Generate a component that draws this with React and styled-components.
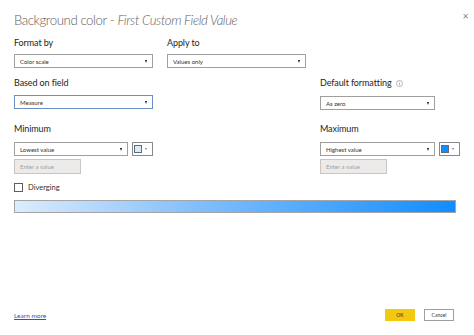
import { styled, createGlobalStyle } from "styled-components";

const GlobalStyle = createGlobalStyle`
  html, body {
    margin: 0;
    padding: 0;
    background: #ffffff;
  }
  body {
    font-family: Lato, "Open Sans", sans-serif;
    color: #252423;
  }
`;

const Dialog = styled.div`
  width: 474px;
  height: 335px;
  box-sizing: border-box;
  display: flex;
  flex-direction: column;
  padding: 0 14px 14px 14px;
  background: #ffffff;
`;

const Header = styled.div`
  display: flex;
  justify-content: space-between;
  align-items: flex-start;
  padding-top: 10px;
  margin-right: -9px;
`;

const Title = styled.h1`
  margin: 0;
  font-size: 13.2px;
  line-height: 20px;
  font-weight: 300;
  letter-spacing: -0.4px;
  color: #605e5c;
  white-space: nowrap;
  em {
    font-style: italic;
  }
`;

const Close = styled.span`
  font-family: "DejaVu Sans", sans-serif;
  font-size: 8px;
  line-height: 9px;
  color: #8a8886;
  margin-top: 2px;
`;

const Form = styled.div`
  display: grid;
  grid-template-columns: 139px 139px 140px;
  column-gap: 14px;
  margin-top: 7px;
`;

const Field = styled.div`
  display: flex;
  flex-direction: column;
  margin-top: ${(p) => p.$top || 0}px;
`;

const Label = styled.div`
  font-size: 9px;
  line-height: 12px;
  letter-spacing: -0.1px;
  color: #252423;
  display: flex;
  align-items: center;
  gap: 5px;
  margin-bottom: ${(p) => p.$gap || 5}px;
`;

const Row = styled.div`
  display: flex;
  gap: 4px;
`;

const Select = styled.div`
  box-sizing: border-box;
  height: 14px;
  width: ${(p) => p.$width || "100%"};
  border: 1px solid ${(p) => (p.$focus ? "#6a8fc7" : "#a19f9d")};
  background: #fff;
  display: flex;
  align-items: center;
  justify-content: space-between;
  padding: 0 5px 0 5px;
  font-size: 6px;
  color: #323130;
  &::after {
    content: "";
    border-left: 1.6px solid transparent;
    border-right: 1.6px solid transparent;
    border-top: 3px solid #111;
  }
`;

const ColorButton = styled.div`
  box-sizing: border-box;
  width: 21px;
  height: 14px;
  border: 1px solid #8a8886;
  display: flex;
  align-items: center;
  padding-left: 1px;
  gap: 3px;
  &::after {
    content: "";
    border-left: 1.4px solid transparent;
    border-right: 1.4px solid transparent;
    border-top: 2px solid #7a7a7a;
  }
`;

const Swatch = styled.div`
  width: 8px;
  height: 8px;
  box-sizing: border-box;
  border: 1px solid #5f6b78;
  background: ${(p) => p.$color};
`;

const ValueInput = styled.div`
  box-sizing: border-box;
  width: 67px;
  height: 15px;
  margin-top: 3px;
  border: 1px solid #c8c6c4;
  background: #edebe9;
  font-size: 6px;
  color: #a19f9d;
  display: flex;
  align-items: center;
  padding-left: 5px;
`;

const Check = styled.label`
  display: flex;
  align-items: center;
  gap: 5px;
  margin-top: 9px;
  font-size: 7.5px;
  color: #323130;
  height: 9px;
`;

const Box = styled.span`
  box-sizing: border-box;
  width: 9px;
  height: 9px;
  border: 1px solid #605e5c;
  background: #fff;
`;

const Gradient = styled.div`
  box-sizing: border-box;
  width: 442px;
  height: 13px;
  margin-top: 8px;
  border: 1px solid #a5a5a5;
  background: linear-gradient(to right, #dcecfd, #84c0fb 40%, #118dff);
`;

const Footer = styled.div`
  margin-top: auto;
  display: flex;
  align-items: center;
  justify-content: space-between;
  padding-right: 6px;
`;

const Link = styled.a`
  font-size: 6.5px;
  color: #2f4fc4;
  text-decoration: underline;
`;

const Buttons = styled.div`
  display: flex;
  gap: 9px;
`;

const Button = styled.button`
  box-sizing: border-box;
  width: 30px;
  height: 12px;
  padding: 0;
  font-family: inherit;
  font-size: 5px;
  color: #323130;
  border: 1px solid ${(p) => (p.$primary ? "#f2c811" : "#a19f9d")};
  background: ${(p) => (p.$primary ? "#f2c811" : "#ffffff")};
`;

const InfoIcon = () => (
  <svg width="7" height="7" viewBox="0 0 14 14">
    <circle cx="7" cy="7" r="6" fill="none" stroke="#8a8886" strokeWidth="1.2" />
    <line x1="7" y1="6" x2="7" y2="10.5" stroke="#8a8886" strokeWidth="1.2" />
    <circle cx="7" cy="4" r="0.8" fill="#8a8886" />
  </svg>
);

const Empty = styled.div``;

export default function App() {
  return (
    <>
      <GlobalStyle />
      <Dialog>
        <Header>
          <Title>
            Background color - <em>First Custom Field Value</em>
          </Title>
          <Close>✕</Close>
        </Header>

        <Form>
          <Field>
            <Label>Format by</Label>
            <Select>Color scale</Select>
          </Field>
          <Field>
            <Label>Apply to</Label>
            <Select>Values only</Select>
          </Field>
          <Empty />

          <Field $top={9}>
            <Label $gap={6}>Based on field</Label>
            <Select $focus>Measure</Select>
          </Field>
          <Empty />
          <Field $top={9}>
            <Label $gap={7}>
              Default formatting <InfoIcon />
            </Label>
            <Select $width="115px">As zero</Select>
          </Field>

          <Field $top={13}>
            <Label $gap={7}>Minimum</Label>
            <Row>
              <Select $width="114px">Lowest value</Select>
              <ColorButton>
                <Swatch $color="#dce9f8" />
              </ColorButton>
            </Row>
            <ValueInput>Enter a value</ValueInput>
          </Field>
          <Empty />
          <Field $top={13}>
            <Label $gap={7}>Maximum</Label>
            <Row>
              <Select $width="115px">Highest value</Select>
              <ColorButton>
                <Swatch $color="#118dff" />
              </ColorButton>
            </Row>
            <ValueInput>Enter a value</ValueInput>
          </Field>
        </Form>

        <Check>
          <Box />
          Diverging
        </Check>

        <Gradient />

        <Footer>
          <Link href="#">Learn more</Link>
          <Buttons>
            <Button $primary>OK</Button>
            <Button>Cancel</Button>
          </Buttons>
        </Footer>
      </Dialog>
    </>
  );
}
